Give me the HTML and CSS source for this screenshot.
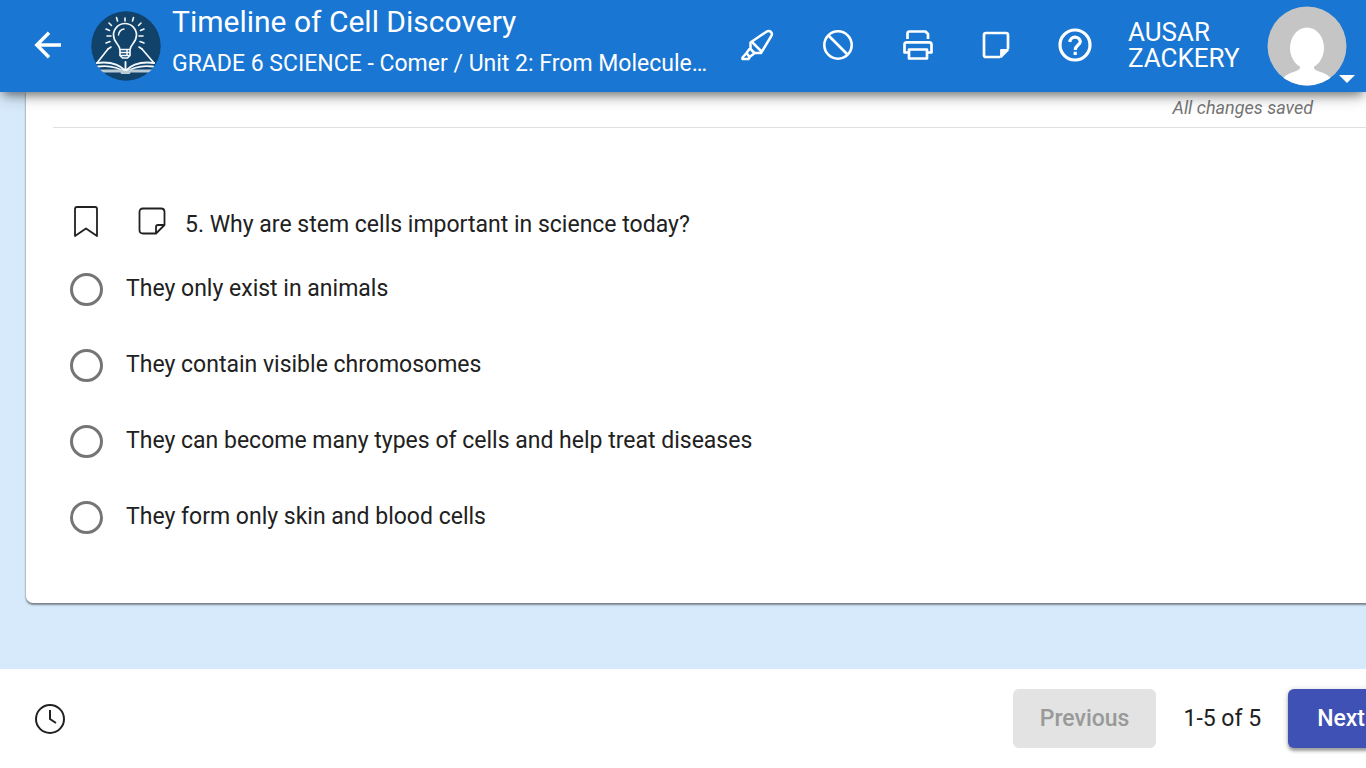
FILE: index.html
```html
<!DOCTYPE html>
<html lang="en">
<head>
<meta charset="utf-8">
<meta name="viewport" content="width=device-width, initial-scale=1">
<title>Timeline of Cell Discovery</title>
<link rel="stylesheet" href="styles.css">
</head>
<body>
<header class="topbar">
  <button class="icon-button back" type="button" aria-label="Back">
    <svg width="28" height="28" viewBox="0 0 28 28" fill="none" stroke="#fff" stroke-width="3.4"><path d="M27 14H4M15 1.800L2.800 14L15 26.200"/></svg>
  </button>
  <svg class="logo" width="70" height="70" viewBox="0 0 70 70" aria-hidden="true">
    <defs><clipPath id="disc"><circle cx="35" cy="35" r="35"/></clipPath></defs>
    <circle cx="35" cy="35" r="34.700" fill="#10426a"/>
    <g fill="none" stroke="#f2f7fb" stroke-linecap="round" clip-path="url(#disc)">
      <path stroke-width="1.700" d="M29 39C29 33 22.500 32 22.500 24a11.500 11.500 0 0 1 23 0C45.500 32 39 33 39 39V44.500L36.500 47H31.500L29 44.500Z"/>
      <path stroke-width="1.500" d="M27.500 24c.5-3.500 2.500-5.500 5.500-6M29.500 38.500h9M29.500 41.500h9M30 44.500h8M36 38.500v6"/>
      <path stroke-width="1.600" d="M34 7v3M25.500 6.500l1 3.500M42.500 6.500l-1 3.500M18 12l2.500 2.500M50 12l-2.500 2.500M15 18l3.500 1.500M53 18l-3.500 1.500M16 25h4M48 25h4M15 32l4-1.500M53 32l-4-1.500M17 38l3-2M51 38l-3-2"/>
      <path stroke-width="1.700" d="M17 38L6 52M51 38L63 52"/>
      <path stroke-width="1.900" d="M6 52C18 50.500 28 53 34.500 60C41 53 51 50.500 63 52M7 55.500C19 54 27 56 34.500 61.500C42 56 50 54 62 55.500M34.500 51v9"/>
      <path stroke="#b9cad7" stroke-width="3" d="M8 60H31M38 60H62M31 61.500h7"/>
    </g>
  </svg>
  <div class="heading">
    <h1 class="title">Timeline of Cell Discovery</h1>
    <p class="course">GRADE 6 SCIENCE - Comer / Unit 2: From Molecule…</p>
  </div>
  <nav class="tools" aria-label="Tools">
    <button class="icon-button" type="button" aria-label="Highlighter">
      <svg width="34" height="32" viewBox="0 0 34 32" fill="none" stroke="#fff" stroke-width="2.500" stroke-linejoin="round"><path d="M10.500 13.500L26 3C30 .5 33.500 4 31 7.500L21 24L14.500 24L10.500 20ZM12.500 13.500L21.500 22.500M10.500 18.500L6.500 24L9.500 28L15.500 23.500M6.500 24L2.500 28.500V30H8.500L10 27.500"/></svg>
    </button>
    <button class="icon-button" type="button" aria-label="Answer eliminator">
      <svg width="32" height="32" viewBox="0 0 32 32" fill="none" stroke="#fff" stroke-width="2.600"><circle cx="16" cy="16" r="13.700"/><path d="M6.500 6.500L25.500 25.500"/></svg>
    </button>
    <button class="icon-button" type="button" aria-label="Print">
      <svg width="32" height="32" viewBox="0 0 32 32" fill="none" stroke="#fff" stroke-width="2.700" stroke-linejoin="round"><path d="M5.500 10V4.500Q5.500 2.500 7.500 2.500H23.500L26 5V10M7 23.500H2.500V15.500Q2.500 13.300 4.700 13.300H27.300Q29.500 13.300 29.500 15.500V23.500H25M7 20.500H25V29.500H7Z"/></svg>
    </button>
    <button class="icon-button" type="button" aria-label="Notes">
      <svg width="28" height="28" viewBox="0 0 28 28" fill="none" stroke="#fff" stroke-width="2.700" stroke-linejoin="round"><path d="M18 26H4Q2 26 2 24V4Q2 2 4 2H24Q26 2 26 4V18"/><path fill="#fff" stroke-width="1.800" d="M19 26V19H26Z"/></svg>
    </button>
    <button class="icon-button" type="button" aria-label="Help">
      <svg width="34" height="34" viewBox="0 0 34 34" fill="none" stroke="#fff" stroke-width="3.200"><circle cx="17" cy="17" r="15"/><path d="M11.800 14A5.300 5.300 0 0 1 22.300 13.500C22.300 17 17.200 17.200 17.200 22M17.200 23.700V27"/></svg>
    </button>
  </nav>
  <button class="account" type="button">
    <span class="account-name">AUSAR ZACKERY</span>
    <svg class="avatar" width="88" height="80" viewBox="0 0 88 80" aria-hidden="true">
      <defs><clipPath id="avatar-disc"><circle cx="40" cy="40" r="39.500"/></clipPath></defs>
      <circle cx="40" cy="40" r="39.500" fill="#c5c5c5"/>
      <g fill="#fff" clip-path="url(#avatar-disc)"><ellipse cx="40" cy="42" rx="17" ry="20.500"/><path d="M33 58h14v4c1 4 10 3 17 10l6 8H10l6-8c7-7 16-6 17-10Z"/></g>
      <path fill="#fff" d="M72 69H88L80 77Z"/>
    </svg>
  </button>
</header>
<main class="workspace">
  <section class="card">
    <p class="save-status" role="status">All changes saved</p>
    <form class="question">
      <div class="question-head">
        <button class="icon-button" type="button" aria-label="Bookmark question">
          <svg width="24" height="32" viewBox="0 0 24 32" fill="none" stroke="#212121" stroke-width="1.800" stroke-linejoin="round"><path d="M1 30V3Q1 1 3 1H21Q23 1 23 3V30L12 22.500Z"/></svg>
        </button>
        <button class="icon-button note" type="button" aria-label="Add note">
          <svg width="28" height="28" viewBox="0 0 28 28" fill="none" stroke="#212121" stroke-width="1.800" stroke-linejoin="round"><path d="M18 26.500H5Q1.500 26.500 1.500 23V5Q1.500 1.500 5 1.500H23Q26.500 1.500 26.500 5V18L18 26.500V20Q18 18 20 18H26.500"/></svg>
        </button>
        <h2 class="prompt" id="prompt">5. Why are stem cells important in science today?</h2>
      </div>
      <div class="choices" role="radiogroup" aria-labelledby="prompt">
        <label class="choice"><input class="radio" type="radio" name="answer" value="a"><span>They only exist in animals</span></label>
        <label class="choice"><input class="radio" type="radio" name="answer" value="b"><span>They contain visible chromosomes</span></label>
        <label class="choice"><input class="radio" type="radio" name="answer" value="c"><span>They can become many types of cells and help treat diseases</span></label>
        <label class="choice"><input class="radio" type="radio" name="answer" value="d"><span>They form only skin and blood cells</span></label>
      </div>
    </form>
  </section>
</main>
<footer class="bottombar">
  <button class="icon-button timer" type="button" aria-label="Timer">
    <svg width="32" height="32" viewBox="0 0 32 32" fill="none" stroke="#212121" stroke-width="2"><circle cx="16" cy="16" r="14"/><path d="M16 7V16L22 20"/></svg>
  </button>
  <button class="nav-button" type="button" disabled>Previous</button>
  <span class="range">1-5 of 5</span>
  <button class="nav-button next" type="button">Next</button>
</footer>
</body>
</html>
```
FILE: styles.css
```css
* {
  box-sizing: border-box;
}

body {
  margin: 0;
  min-height: 100vh;
  display: flex;
  flex-direction: column;
  overflow: hidden;
  background: #fff;
  color: #212121;
  font-family: Roboto, "Liberation Sans", sans-serif;
  font-size: 23px;
  line-height: 28px;
}

h1, h2, p {
  margin: 0;
  font-weight: 400;
}

button {
  font: inherit;
  color: inherit;
  cursor: pointer;
}

svg {
  display: block;
  flex: none;
}

.icon-button {
  display: flex;
  align-items: center;
  justify-content: center;
  flex: none;
  padding: 0;
  border: 0;
  background: none;
}

.topbar {
  position: relative;
  z-index: 1;
  display: flex;
  align-items: center;
  height: 92px;
  padding: 0 11px 0 34px;
  background: #1976d2;
  color: #fff;
  box-shadow: 0 7px 8px -4px rgba(0, 0, 0, 0.3), 0 4px 16px -2px rgba(0, 0, 0, 0.4);
}

.back,
.tools {
  padding-bottom: 2px;
}

.logo {
  margin: 0 11px 0 29px;
}

.heading {
  flex: 1;
  min-width: 0;
  display: grid;
  gap: 8px;
  padding-bottom: 8px;
}

.title {
  font-size: 30px;
  line-height: 36px;
}

.course {
  overflow: hidden;
  white-space: nowrap;
  text-overflow: ellipsis;
  line-height: 32px;
}

.tools {
  display: flex;
  align-items: center;
  gap: 48px;
  margin-right: 36px;
}

.account {
  display: flex;
  align-items: center;
  gap: 16px;
  padding: 0;
  border: 0;
  background: none;
  text-align: left;
}

.account-name {
  width: 123px;
  padding-bottom: 2px;
  font-size: 26px;
  line-height: 26px;
}

.workspace {
  flex: 1;
  display: grid;
  padding: 0 0 66px 26px;
  background: #d7eafb;
}

.card {
  margin-right: -40px;
  padding: 0 0 56px 27px;
  border-radius: 0 0 7px 7px;
  background: #fff;
  box-shadow: 0 2px 2px rgba(0, 0, 0, 0.4), 0 0 3px rgba(0, 0, 0, 0.2);
}

.save-status {
  padding: 2px 93px 5px 0;
  border-bottom: 1px solid #e0e0e0;
  color: #757575;
  font-size: 18px;
  font-style: italic;
  text-align: right;
}

.question {
  padding: 78px 0 0 17px;
}

.question-head {
  display: flex;
  align-items: flex-start;
  padding-left: 4px;
}

.note {
  margin: 1px 19px 0 40px;
}

.prompt {
  padding-top: 5px;
  font-size: 23px;
  line-height: 28px;
}

.choices {
  display: grid;
  gap: 40px;
  padding-top: 32px;
}

.choice {
  display: flex;
  align-items: center;
  gap: 23px;
  height: 36px;
}

.radio {
  appearance: none;
  flex: none;
  width: 33px;
  height: 33px;
  margin: 0;
  border: 3px solid #757575;
  border-radius: 50%;
}

.radio:checked {
  border-color: #3f51b5;
  background: radial-gradient(circle, #3f51b5 45%, transparent 50%);
}

.bottombar {
  display: flex;
  align-items: center;
  height: 99px;
  margin-right: -28px;
  padding-left: 34px;
  background: #fff;
}

.timer {
  margin-right: auto;
}

.nav-button {
  height: 59px;
  padding: 0 27px;
  border: 0;
  border-radius: 6px;
  background: #e3e3e3;
  color: #999;
  font-weight: 500;
}

.nav-button:disabled {
  cursor: default;
}

.range {
  padding: 0 27px;
}

.next {
  padding: 0 29px;
  background: #3f51b5;
  color: #fff;
  box-shadow: 0 3px 3px rgba(0, 0, 0, 0.3), 0 1px 6px rgba(0, 0, 0, 0.2);
}
```
